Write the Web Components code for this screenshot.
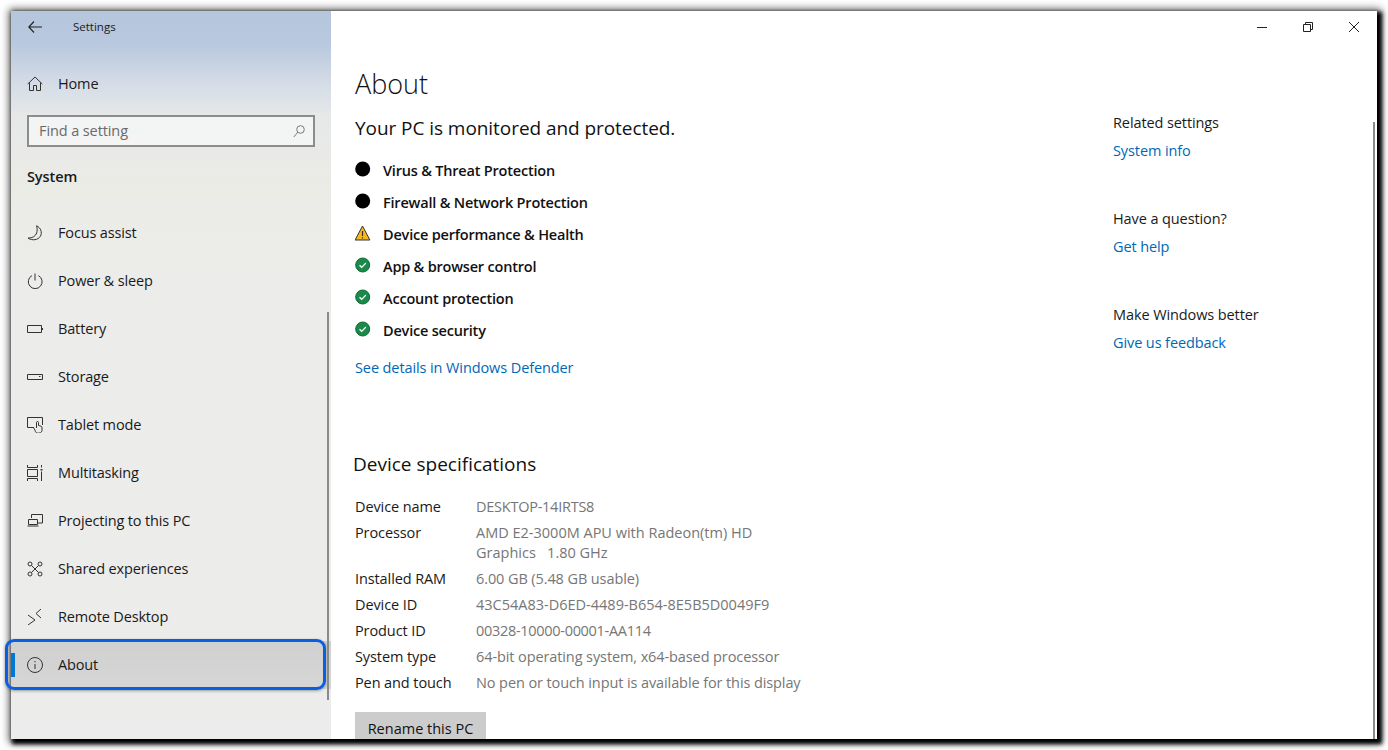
<!DOCTYPE html>
<html>
<head>
<meta charset="utf-8">
<title>Settings</title>
<style>
  html, body { margin: 0; height: 750px; overflow: hidden; background: #fff; }
  body { font: 14.5px/20px "Open Sans", "Liberation Sans", sans-serif; letter-spacing: -.1px; color: #1a1a1a; }
</style>
</head>
<body>
<settings-window>
  <settings-sidebar slot="sidebar">
    <nav-item icon="focus">Focus assist</nav-item>
    <nav-item icon="power">Power &amp; sleep</nav-item>
    <nav-item icon="battery">Battery</nav-item>
    <nav-item icon="storage">Storage</nav-item>
    <nav-item icon="tablet">Tablet mode</nav-item>
    <nav-item icon="multi">Multitasking</nav-item>
    <nav-item icon="project">Projecting to this PC</nav-item>
    <nav-item icon="shared">Shared experiences</nav-item>
    <nav-item icon="remote">Remote Desktop</nav-item>
    <nav-item icon="info" selected>About</nav-item>
  </settings-sidebar>

  <about-page slot="main">
    <div slot="status">
      <status-row kind="dot">Virus &amp; Threat Protection</status-row>
      <status-row kind="dot">Firewall &amp; Network Protection</status-row>
      <status-row kind="warn">Device performance &amp; Health</status-row>
      <status-row kind="ok">App &amp; browser control</status-row>
      <status-row kind="ok">Account protection</status-row>
      <status-row kind="ok">Device security</status-row>
    </div>
    <div slot="specs">
      <spec-row label="Device name" style="letter-spacing:-.25px">DESKTOP-14IRTS8</spec-row>
      <spec-row label="Processor" style="letter-spacing:0">AMD E2-3000M APU with Radeon(tm) HD<br>Graphics &nbsp; 1.80 GHz</spec-row>
      <spec-row label="Installed RAM">6.00 GB (5.48 GB usable)</spec-row>
      <spec-row label="Device ID" style="letter-spacing:0">43C54A83-D6ED-4489-B654-8E5B5D0049F9</spec-row>
      <spec-row label="Product ID" style="letter-spacing:-.3px">00328-10000-00001-AA114</spec-row>
      <spec-row label="System type">64-bit operating system, x64-based processor</spec-row>
      <spec-row label="Pen and touch">No pen or touch input is available for this display</spec-row>
    </div>
    <div slot="aside">
      <related-group title="Related settings" link="System info"></related-group>
      <related-group title="Have a question?" link="Get help"></related-group>
      <related-group title="Make Windows better" link="Give us feedback"></related-group>
    </div>
  </about-page>
</settings-window>

<script>
const ICONS = {
  focus: '<path d="M9.5 .8C13.6 2.6 15.6 7.4 13.4 11.2 11.2 15 5.4 16 1 13.1 5.4 13.2 8.6 11.2 9.7 8 10.4 5.6 10.3 3 9.5 .8Z"/>',
  power: '<path d="M5 2.6A6.9 6.9 0 1 0 11.4 2.6M8 .5V7.5"/>',
  battery: '<path d="M.5 4.5H14.5V11.5H.5ZM15.5 7V9"/>',
  storage: '<path d="M.5 5.5H15.5V10.5H.5ZM12 7.5H13.5"/>',
  tablet: '<path d="M7 10.5H.5V.5H15.5V8M9.5 11V5.5A1 1 0 0 1 11.5 5.5V8.5L14 9.2C14.8 9.5 15 10 15 10.8V12A3.5 3.5 0 0 1 8 13.2L6.8 11"/>',
  multi: '<path d="M.5 0V2.5H10.5V0M.5 16V13.5H10.5V16M.5 4.5H10.5V11.5H.5ZM14.5 0V2.5M14.5 6.5V16"/><path d="M13.5 4H15.5V5.5H13.5Z" fill="#333" stroke="none"/>',
  project: '<path d="M4.5 5V1.5H15.5V10H11M1.5 6.5H10.5V11.5H1.5ZM.5 13H11.5" />',
  shared: '<circle cx="3" cy="3" r="2"/><circle cx="13" cy="3" r="2"/><circle cx="3" cy="13" r="2"/><circle cx="13" cy="13" r="2"/><path d="M4.5 4.5 11.5 11.5M11.5 4.5 4.5 11.5"/>',
  remote: '<path d="M1 6 8 11 1 16M14 0 9 4.5 14 9"/>',
  info: '<circle cx="8" cy="8" r="7.5"/><path d="M8 7V12M8 4V5.3"/>',
  home: '<path d="M.7 8 8 1 15.3 8M2.5 6.5V14.5H6.5V9.5H9.5V14.5H13.5V6.5"/>'
};
function icon(name) {
  return `<svg width="16" height="16" viewBox="0 0 16 16" fill="none" stroke="#333" stroke-width="1">${ICONS[name]}</svg>`;
}

class SettingsWindow extends HTMLElement {
  constructor() {
    super();
    const shadow = this.attachShadow({ mode: 'open' });
    shadow.innerHTML = `
      <style>
        :host {
          display: flex; position: relative; width: 1366px; height: 728px; margin: 11px;
          background: #fff;
          box-shadow: 1px 1px 8px 3px rgba(0,0,0,.6), 3px 3px 4px 2px #000;
        }
      </style>
      <slot name="sidebar"></slot>
      <slot name="main"></slot>
    `;
  }
}
customElements.define('settings-window', SettingsWindow);

class SettingsSidebar extends HTMLElement {
  constructor() {
    super();
    const shadow = this.attachShadow({ mode: 'open' });
    shadow.innerHTML = `
      <style>
        :host {
          display: block; position: relative; flex: none; width: 320px; height: 728px;
          background: linear-gradient(#b5c6dd 0, #b8c8de 32px, #d4dce6 72px, #e6e8e9 105px, #ebebe6 170px, #ececea 260px, #ececec 100%);
        }
        .title { display: flex; align-items: center; height: 32px; }
        .back { width: 48px; display: flex; justify-content: center; }
        .title span { margin-left: 14px; font-size: 11.5px; letter-spacing: 0; }
        .home { margin-top: 17px; }
        h2 { margin: 20px 0 22px 16px; font-size: 14.5px; line-height: 20px; font-weight: 600; }
        .bar { position: absolute; left: 316px; top: 301px; width: 2px; height: 388px; background: #8a8a8a; }
      </style>
      <div class="title">
        <div class="back">
          <svg width="14" height="12" viewBox="0 0 14 12" fill="none" stroke="#222" stroke-width="1.1"><path d="M6 .5.8 6 6 11.5M1 6H14"/></svg>
        </div>
        <span>Settings</span>
      </div>
      <nav-item class="home" icon="home">Home</nav-item>
      <search-box></search-box>
      <h2>System</h2>
      <slot></slot>
      <div class="bar"></div>
    `;
  }
}
customElements.define('settings-sidebar', SettingsSidebar);

class NavItem extends HTMLElement {
  constructor() {
    super();
    const shadow = this.attachShadow({ mode: 'open' });
    const selected = this.hasAttribute('selected');
    shadow.innerHTML = `
      <style>
        :host {
          display: flex; align-items: center; position: relative; height: 48px;
          padding-left: 16px; gap: 15px; color: #1a1a1a; letter-spacing: -.15px;
        }
        svg { display: block; flex: none; }
        ${selected ? `
        :host { background: linear-gradient(#d0d0d0, #d6d6d6); }
        .accent { position: absolute; left: 0; top: 12px; width: 4px; height: 24px; background: #0078d7; }
        .ring {
          position: absolute; left: -6px; top: -2px; width: 315px; height: 45px;
          border: 3px solid #0a5fe0; border-radius: 9px;
          box-shadow: 0 1px 3px rgba(0,0,0,.35);
        }` : ''}
      </style>
      ${selected ? '<div class="accent"></div><div class="ring"></div>' : ''}
      ${icon(this.getAttribute('icon'))}
      <slot></slot>
    `;
  }
}
customElements.define('nav-item', NavItem);

class SearchBox extends HTMLElement {
  constructor() {
    super();
    const shadow = this.attachShadow({ mode: 'open' });
    shadow.innerHTML = `
      <style>
        :host {
          display: flex; align-items: center; justify-content: space-between; box-sizing: border-box;
          width: 288px; height: 32px; margin: 7px 0 0 16px; padding: 0 8px 0 10px;
          border: 2px solid #8c8c8c; background: rgba(255,255,255,.5); color: #6a6a6a;
        }
        svg { display: block; }
      </style>
      <span>Find a setting</span>
      <svg width="12" height="13" viewBox="0 0 12 13" fill="none" stroke="#777"><circle cx="7.5" cy="4.5" r="3.8"/><path d="M4.8 7.2.8 12"/></svg>
    `;
  }
}
customElements.define('search-box', SearchBox);

class StatusRow extends HTMLElement {
  constructor() {
    super();
    const shadow = this.attachShadow({ mode: 'open' });
    const marks = {
      dot: '<circle cx="7.7" cy="8" r="7.5" fill="#000"/>',
      warn: '<path d="M7.5 1 14.9 15H.1Z" fill="#f5b81f" stroke="#333"/><path d="M7.5 6V11M7.5 12.3V13.5" stroke="#333" stroke-width="1.2"/>',
      ok: '<circle cx="7.7" cy="8" r="7" fill="#1a8a4a" stroke="#0f6b38"/><path d="M4.5 8.2 6.7 10.3 10.9 6" fill="none" stroke="#fff" stroke-width="1.2"/>'
    };
    shadow.innerHTML = `
      <style>
        :host { display: flex; align-items: center; height: 32px; gap: 12px; font-weight: 600; color: #111; letter-spacing: -.2px; }
        svg { display: block; flex: none; margin-top: -5px; }
      </style>
      <svg width="16" height="16" viewBox="0 0 16 16">${marks[this.getAttribute('kind')]}</svg>
      <slot></slot>
    `;
  }
}
customElements.define('status-row', StatusRow);

class SpecRow extends HTMLElement {
  constructor() {
    super();
    const shadow = this.attachShadow({ mode: 'open' });
    shadow.innerHTML = `
      <style>
        :host { display: grid; grid-template-columns: 121px 400px; padding: 3px 0; color: #1a1a1a; }
        .label { letter-spacing: -.1px; }
        .value { color: #767676; }
      </style>
      <div class="label">${this.getAttribute('label')}</div>
      <div class="value"><slot></slot></div>
    `;
  }
}
customElements.define('spec-row', SpecRow);

class RelatedGroup extends HTMLElement {
  constructor() {
    super();
    const shadow = this.attachShadow({ mode: 'open' });
    shadow.innerHTML = `
      <style>
        :host { display: block; height: 96px; }
        div { height: 28px; line-height: 20px; color: #1a1a1a; }
        a { color: #0067b8; text-decoration: none; }
      </style>
      <div>${this.getAttribute('title')}</div>
      <a href="#">${this.getAttribute('link')}</a>
    `;
  }
}
customElements.define('related-group', RelatedGroup);

class CaptionButtons extends HTMLElement {
  constructor() {
    super();
    const shadow = this.attachShadow({ mode: 'open' });
    shadow.innerHTML = `
      <style>
        :host { display: flex; position: absolute; top: 0; right: 0; }
        div { width: 46px; height: 32px; display: flex; align-items: center; justify-content: center; }
        svg { display: block; }
      </style>
      <div><svg width="10" height="10" fill="none" stroke="#222"><path d="M0 5.5H10"/></svg></div>
      <div><svg width="10" height="10" fill="none" stroke="#222"><path d="M.5 2.5H7.5V9.5H.5ZM2.5 2.5V.5H9.5V7.5H7.5"/></svg></div>
      <div><svg width="10" height="10" fill="none" stroke="#222"><path d="M0 0 10 10M10 0 0 10"/></svg></div>
    `;
  }
}
customElements.define('caption-buttons', CaptionButtons);

class AboutPage extends HTMLElement {
  constructor() {
    super();
    const shadow = this.attachShadow({ mode: 'open' });
    shadow.innerHTML = `
      <style>
        :host { display: flex; position: relative; flex: 1; height: 728px; overflow: hidden; padding-left: 24px; }
        .content { width: 758px; flex: none; }
        h1 { margin: 53px 0 0; font-size: 27px; line-height: 40px; font-weight: 300; color: #111; letter-spacing: 0; }
        .lead { margin: 10px 0 13px; font-size: 19px; line-height: 28px; color: #111; letter-spacing: -.06px; }
        a { color: #0067b8; text-decoration: none; }
        .details { display: block; margin-top: 11px; }
        h3 { margin: 72px 0 16px -2px; font-size: 19px; line-height: 28px; font-weight: 400; color: #111; letter-spacing: 0; }
        button {
          display: block; margin-top: 16px; width: 131px; height: 34px; padding: 0; border: 0;
          background: #ccc; font: inherit; color: #111;
        }
        aside { margin-top: 102px; }
        .bar { position: absolute; right: 2px; top: 111px; bottom: 0; width: 2px; background: #8a8a8a; }
      </style>
      <div class="content">
        <h1>About</h1>
        <div class="lead">Your PC is monitored and protected.</div>
        <slot name="status"></slot>
        <a class="details" href="#">See details in Windows Defender</a>
        <h3>Device specifications</h3>
        <slot name="specs"></slot>
        <button>Rename this PC</button>
      </div>
      <aside><slot name="aside"></slot></aside>
      <caption-buttons></caption-buttons>
      <div class="bar"></div>
    `;
  }
}
customElements.define('about-page', AboutPage);
</script>
</body>
</html>
